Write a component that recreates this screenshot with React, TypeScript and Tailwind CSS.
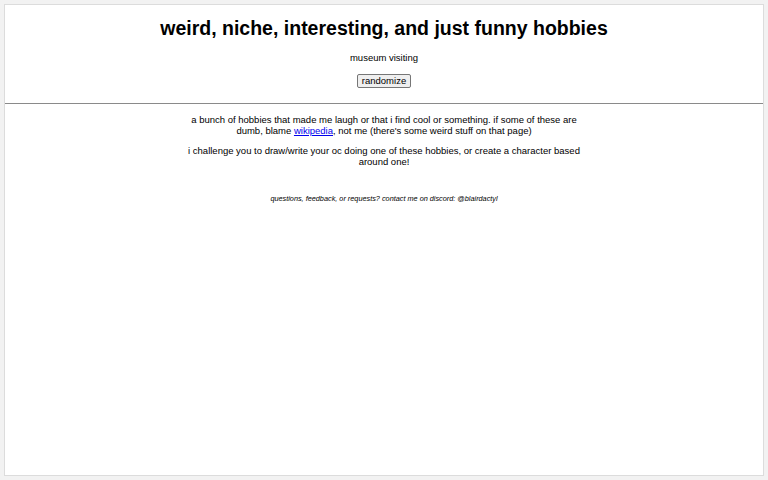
export default function App() {
  return (
    <div className="h-[480px] bg-[#f2f2f2] p-[4px] font-['Liberation_Sans',Arial,sans-serif] text-black">
      <div className="h-full border border-[#dcdcdc] bg-white">
        <header className="flex flex-col items-center pt-[12px]">
          <h1 className="text-[19.5px] leading-[22px] font-bold">weird, niche, interesting, and just funny hobbies</h1>
          <p className="mt-[13px] text-[9.5px] leading-[12px]">museum visiting</p>
          <button className="mt-[10px] h-[14px] rounded-[2px] border border-[#767676] bg-[#efefef] px-[4px] text-[9.5px] leading-[12px]">
            randomize
          </button>
        </header>
        <hr className="mt-[15px] border-t border-[#8a8a8a]" />
        <section className="mx-auto mt-[10px] w-[396px] text-center text-[9.5px] leading-[11px]">
          <p>
            a bunch of hobbies that made me laugh or that i find cool or something. if some of these are dumb, blame{" "}
            <a href="#" className="text-[#0000ee] underline">wikipedia</a>, not me (there's some weird stuff on that page)
          </p>
          <p className="mt-[9px]">
            i challenge you to draw/write your oc doing one of these hobbies, or create a character based around one!
          </p>
          <p className="mt-[27px] text-[7.3px] italic leading-[9px]">
            questions, feedback, or requests? contact me on discord: @blairdactyl
          </p>
        </section>
      </div>
    </div>
  );
}
